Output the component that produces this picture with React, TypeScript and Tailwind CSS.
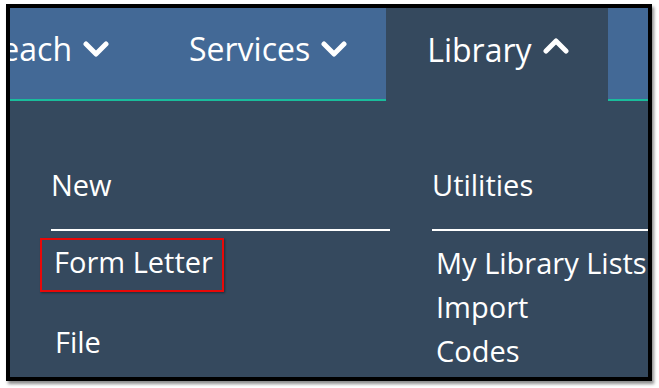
import * as React from 'react';

const Chevron = ({ up = false }: { up?: boolean }) => (
  <svg
    width="26"
    height="16"
    viewBox="0 0 26 16"
    className={`ml-[11px] shrink-0 ${up ? 'mb-[18px]' : 'mb-[10px]'}`}
  >
    <path
      d={up ? 'M3 13 L13 3 L23 13' : 'M3 3 L13 13 L23 3'}
      fill="none"
      stroke="white"
      strokeWidth="5"
      strokeLinecap="round"
      strokeLinejoin="round"
    />
  </svg>
);

interface TabProps {
  label: string;
  active?: boolean;
}

const Tab: React.FC<TabProps> = ({ label, active = false }) => (
  <div
    className={`flex items-center shrink-0 pl-[41px] pr-[39px] h-[93px] ${
      active ? 'bg-[#35495e]' : 'bg-[#436996] border-b-2 border-[#1abc9c]'
    }`}
  >
    <span className="text-[32px] text-white leading-none pb-[10px] whitespace-nowrap">{label}</span>
    <Chevron up={active} />
  </div>
);

export default function App() {
  return (
    <div
      className="w-[659px] h-[388px] bg-white pt-[4px] pl-[6px]"
      style={{ fontFamily: '"Open Sans", "Noto Sans", sans-serif' }}
    >
      <div className="w-[646px] h-[377px] border-4 border-black shadow-[2px_3px_3px_rgba(0,0,0,0.45)] bg-[#35495e] overflow-hidden">
        <div className="flex h-[93px] bg-[#436996] border-b-2 border-[#1abc9c]">
          <div className="flex -mb-[2px]">
            <div className="flex justify-end w-[138px] shrink-0 overflow-hidden">
              <Tab label="Outreach" />
            </div>
            <Tab label="Services" />
            <Tab label="Library" active />
          </div>
        </div>

        <div className="flex pt-[69px] text-white text-[29px] leading-none">
          <div className="ml-[41px] w-[339px] shrink-0">
            <div className="h-[59px]">New</div>
            <div className="h-[2px] bg-white" />
            <div className="mt-[7px] -ml-[11px] inline-block border-2 border-[#e80808] shadow-[1px_1px_2px_rgba(0,0,0,0.4)] pl-[12px] pr-[9px] pt-[7px] pb-[14px]">
              Form Letter
            </div>
            <div className="mt-[35px] ml-[4px]">File</div>
          </div>
          <div className="ml-[42px] w-[240px] shrink-0">
            <div className="h-[59px]">Utilities</div>
            <div className="h-[2px] bg-white" />
            <div className="ml-[4px] mt-[17px] flex flex-col gap-[15px] whitespace-nowrap">
              <div>My Library Lists</div>
              <div>Import</div>
              <div>Codes</div>
            </div>
          </div>
        </div>
      </div>
    </div>
  );
}
